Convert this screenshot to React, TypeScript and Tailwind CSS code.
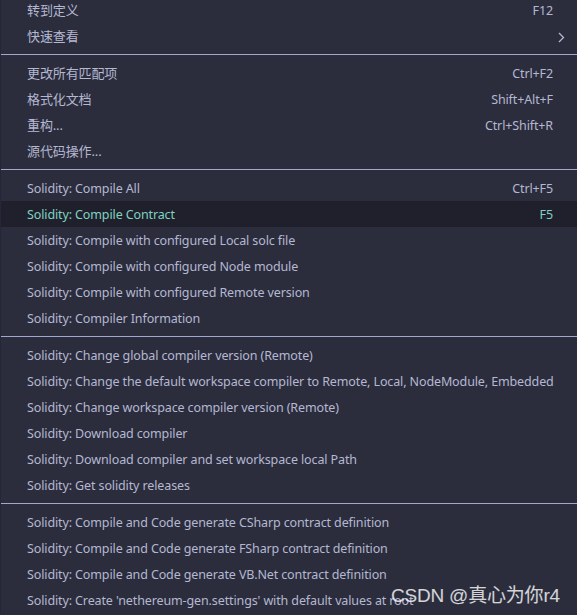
type Item = { label: string; keys?: string; submenu?: boolean; active?: boolean; cjk?: boolean };

const groups: Item[][] = [
  [
    { label: '转到定义', keys: 'F12', cjk: true },
    { label: '快速查看', submenu: true, cjk: true },
  ],
  [
    { label: '更改所有匹配项', keys: 'Ctrl+F2', cjk: true },
    { label: '格式化文档', keys: 'Shift+Alt+F', cjk: true },
    { label: '重构...', keys: 'Ctrl+Shift+R', cjk: true },
    { label: '源代码操作...', cjk: true },
  ],
  [
    { label: 'Solidity: Compile All', keys: 'Ctrl+F5' },
    { label: 'Solidity: Compile Contract', keys: 'F5', active: true },
    { label: 'Solidity: Compile with configured Local solc file' },
    { label: 'Solidity: Compile with configured Node module' },
    { label: 'Solidity: Compile with configured Remote version' },
    { label: 'Solidity: Compiler Information' },
  ],
  [
    { label: 'Solidity: Change global compiler version (Remote)' },
    { label: 'Solidity: Change the default workspace compiler to Remote, Local, NodeModule, Embedded' },
    { label: 'Solidity: Change workspace compiler version (Remote)' },
    { label: 'Solidity: Download compiler' },
    { label: 'Solidity: Download compiler and set workspace local Path' },
    { label: 'Solidity: Get solidity releases' },
  ],
  [
    { label: 'Solidity: Compile and Code generate CSharp contract definition' },
    { label: 'Solidity: Compile and Code generate FSharp contract definition' },
    { label: 'Solidity: Compile and Code generate VB.Net contract definition' },
    { label: "Solidity: Create 'nethereum-gen.settings' with default values at root" },
  ],
];

function MenuRow({ item }: { item: Item }) {
  return (
    <div
      className={`flex h-[26px] items-center pl-[26px] pr-[24px] pt-[2px] ${
        item.active ? 'bg-[#1f202b] text-[#7fd2c2]' : 'text-[#b5b8d1]'
      }`}
    >
      <span className={`flex-1 whitespace-nowrap ${item.cjk ? 'text-[13px]' : ''}`}>{item.label}</span>
      {item.keys && <span className="whitespace-nowrap">{item.keys}</span>}
      {item.submenu && (
        <svg width="7" height="11" viewBox="0 0 7 11" className="mr-[-12px]">
          <path d="M1 1l4.5 4.5L1 10" fill="none" stroke="#b5b8d1" strokeWidth="1.3" />
        </svg>
      )}
    </div>
  );
}

export default function App() {
  return (
    <div className="relative h-[615px] w-[577px] overflow-hidden bg-[#2b2d3d] text-[12.5px] tracking-[-0.12px] [font-family:'Noto_Sans','Noto_Sans_CJK_SC',sans-serif]">
      <div className="mt-[-3px] border-l border-[#24263a]">
        {groups.map((group, gi) => (
          <div key={gi}>
            {gi > 0 && (
              <div className="flex h-[11px] items-center">
                <div className="h-px w-full bg-[#a2a7cd]" />
              </div>
            )}
            {group.map((item) => (
              <MenuRow key={item.label} item={item} />
            ))}
          </div>
        ))}
      </div>

      {/* watermark */}
      <div className="pointer-events-none absolute left-[391px] top-[582px] whitespace-nowrap text-[19px] tracking-[-0.2px] text-white/80 [font-family:'Liberation_Sans','Noto_Sans_CJK_SC',sans-serif]">
        CSDN @真心为你r4
      </div>
    </div>
  );
}
